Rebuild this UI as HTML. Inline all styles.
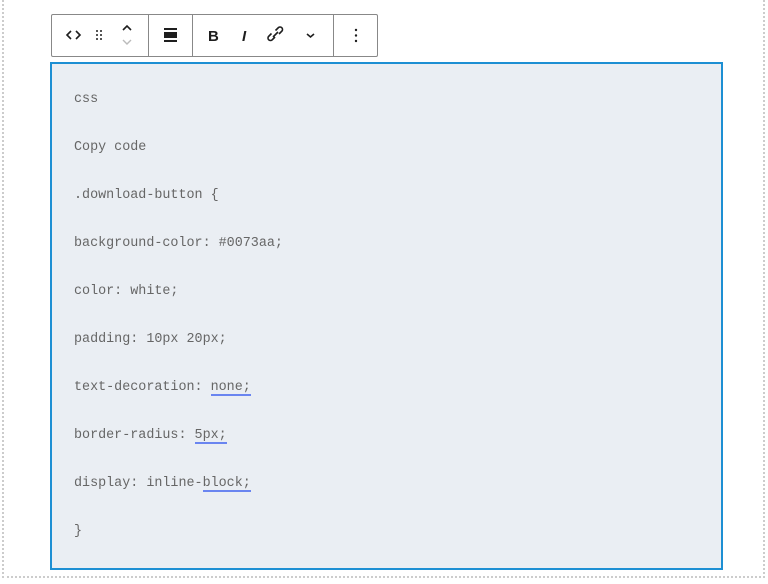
<!DOCTYPE html>
<html><head><style>
body{margin:0;width:768px;height:584px;background:#fff;position:relative;overflow:hidden;font-family:"Liberation Sans",sans-serif}
.outer{position:absolute;left:2px;top:-4px;width:759px;height:580px;border:2px dotted #ccc;border-top:none}
.tb{position:absolute;left:51px;top:14px;width:325px;height:41px;border:1px solid #888;border-radius:2px;background:#fff;display:flex}
.g{border-right:1px solid #888;height:100%;display:flex;align-items:center}
.g:last-child{border-right:none}
.code{position:absolute;left:50px;top:62px;width:669px;height:504px;border:2px solid #1d8fd3;background:#eaeef3}
.l{position:absolute;left:22px;font-family:"Liberation Mono",monospace;font-size:13.4px;line-height:16px;color:#666}
u{text-decoration:none;display:inline-block;line-height:13px;border-bottom:2px solid #6a85f0}
</style></head><body>
<div class="outer"></div>
<div class="tb">
 <div class="g" style="width:96px">
  <svg width="96" height="41"><path d="M19 16l-4 4 4 4M24 16l4 4-4 4" stroke="#1e1e1e" stroke-width="1.6" fill="none"/>
  <g fill="#1e1e1e"><circle cx="45" cy="16" r="1"/><circle cx="49" cy="16" r="1"/><circle cx="45" cy="20" r="1"/><circle cx="49" cy="20" r="1"/><circle cx="45" cy="24" r="1"/><circle cx="49" cy="24" r="1"/></g>
  <path d="M71 15l4-4 4 4" stroke="#1e1e1e" stroke-width="1.6" fill="none"/><path d="M71 25l4 4 4-4" stroke="#bbb" stroke-width="1.4" fill="none"/></svg>
 </div>
 <div class="g" style="width:43px"><svg width="43" height="41"><rect x="15" y="13" width="13" height="2" fill="#1e1e1e"/><rect x="15" y="17" width="13" height="6" fill="#1e1e1e"/><rect x="15" y="25" width="13" height="2" fill="#1e1e1e"/></svg></div>
 <div class="g" style="width:140px">
  <svg width="140" height="41"><text x="15" y="26" font-family="Liberation Sans" font-weight="bold" font-size="15" fill="#1e1e1e">B</text>
  <text x="49" y="26" font-family="Liberation Sans" font-style="italic" font-weight="bold" font-size="15" fill="#1e1e1e">I</text>
  <path d="M82 22l-3 3a2.5 2.5 0 0 1-3.5-3.5l3-3M86 19l3-3a2.5 2.5 0 0 0-3.5-3.5l-3 3M80 22l5-5" stroke="#1e1e1e" stroke-width="1.6" fill="none"/>
  <path d="M114 19l3.5 3 3.5-3" stroke="#1e1e1e" stroke-width="1.6" fill="none"/></svg>
 </div>
 <div class="g" style="width:44px"><svg width="44" height="41"><g fill="#1e1e1e"><circle cx="22" cy="15" r="1.2"/><circle cx="22" cy="20.5" r="1.2"/><circle cx="22" cy="26" r="1.2"/></g></svg></div>
</div>
<div class="code">
<div class="l" style="top:28px">css</div>
<div class="l" style="top:76px">Copy code</div>
<div class="l" style="top:124px">.download-button {</div>
<div class="l" style="top:172px">background-color: #0073aa;</div>
<div class="l" style="top:220px">color: white;</div>
<div class="l" style="top:268px">padding: 10px 20px;</div>
<div class="l" style="top:316px">text-decoration: <u>none;</u></div>
<div class="l" style="top:364px">border-radius: <u>5px;</u></div>
<div class="l" style="top:412px">display: inline-<u>block;</u></div>
<div class="l" style="top:460px">}</div>
</div>
</body></html>
